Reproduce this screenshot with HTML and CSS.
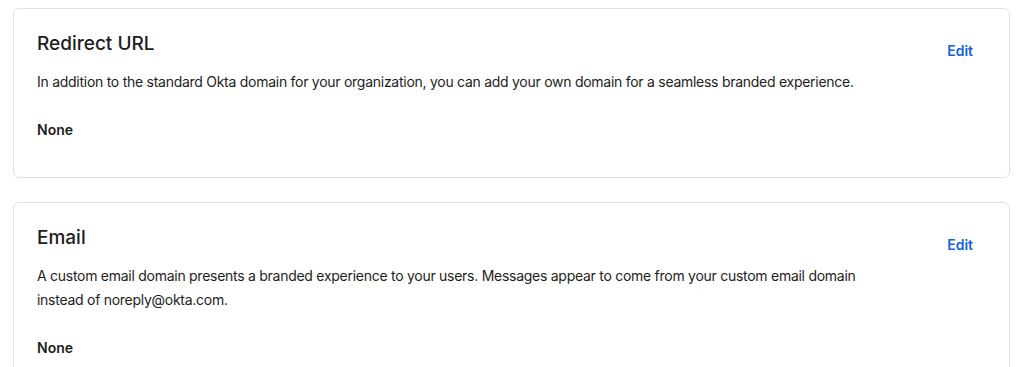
FILE: index.html
```html
<!DOCTYPE html>
<html>
<head>
<meta charset="utf-8">
<link rel="stylesheet" href="styles.css">
</head>
<body>
<div class="page">
  <section class="card">
    <div class="card-head">
      <h2 class="title">Redirect URL</h2>
      <a class="edit" href="#">Edit</a>
    </div>
    <p class="desc">In addition to the standard Okta domain for your organization, you can add your own domain for a seamless branded experience.</p>
    <p class="value">None</p>
  </section>
  <section class="card">
    <div class="card-head">
      <h2 class="title">Email</h2>
      <a class="edit" href="#">Edit</a>
    </div>
    <p class="desc">A custom email domain presents a branded experience to your users. Messages appear to come from your custom email domain instead of noreply@okta.com.</p>
    <p class="value">None</p>
  </section>
</div>
</body>
</html>
```
FILE: styles.css
```css
html, body {
  margin: 0;
  padding: 0;
  background: #ffffff;
}
body {
  font-family: Inter, "Noto Sans", sans-serif;
  color: #1d1d21;
}
.page {
  display: flex;
  flex-direction: column;
  gap: 24px;
  padding: 8px 25px 0 13px;
}
.card {
  border: 1px solid #e1e1e1;
  border-radius: 6px;
  padding: 23px 36px 35px 23px;
  background: #fff;
}
.card-head {
  display: flex;
  justify-content: space-between;
  align-items: flex-start;
}
.title {
  margin: 0;
  font-size: 19px;
  line-height: 24px;
  font-weight: 500;
}
.edit {
  margin-top: 9px;
  font-size: 14px;
  line-height: 20px;
  font-weight: 600;
  color: #1662dd;
  text-decoration: none;
}
.desc {
  margin: 9px 0 0;
  font-size: 14px;
  line-height: 24px;
  letter-spacing: -0.27px;
  max-width: 835px;
}
.value {
  margin: 24px 0 0;
  font-size: 14px;
  line-height: 24px;
  font-weight: 600;
}
```
